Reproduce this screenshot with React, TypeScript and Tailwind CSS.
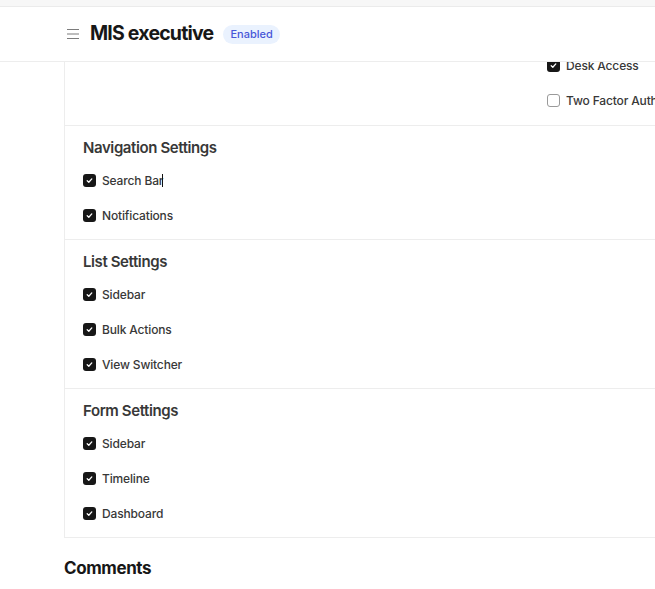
import React from "react";

function Check({ checked }: { checked: boolean }) {
  if (!checked) {
    return <span className="w-[13px] h-[13px] rounded-[3px] border border-[#9a9a9a] bg-white shrink-0" />;
  }
  return (
    <span className="w-[13px] h-[13px] rounded-[3px] bg-[#171717] shrink-0 flex items-center justify-center">
      <svg width="9" height="9" viewBox="0 0 9 9" fill="none">
        <path d="M2.2 4.7 L3.8 6.2 L6.8 2.9" stroke="white" strokeWidth="1.3" strokeLinecap="round" strokeLinejoin="round" />
      </svg>
    </span>
  );
}

function Row({ label, checked = true, caret = false }: { label: string; checked?: boolean; caret?: boolean }) {
  return (
    <div className="h-[35px] flex items-center gap-[6px]">
      <Check checked={checked} />
      <span className="text-[12px] font-medium tracking-[-0.15px] text-[#383838] leading-none whitespace-nowrap flex items-center">
        {label}
        {caret && <span className="inline-block w-px h-[13px] bg-[#111] ml-[-1px]" />}
      </span>
    </div>
  );
}

function Heading({ title }: { title: string }) {
  return <div className="h-[20px] flex items-center text-[15px] font-semibold tracking-[-0.4px] text-[#383838]">{title}</div>;
}

function Section({ title, children, last = false }: { title: string; children: React.ReactNode; last?: boolean }) {
  return (
    <div className={last ? "pt-[12px] pb-[6px] px-[18px]" : "pt-[12px] pb-[6px] px-[18px] border-b border-[#ededed]"}>
      <Heading title={title} />
      <div className="mt-[5px]">{children}</div>
    </div>
  );
}

export default function App() {
  return (
    <div className="w-[655px] h-[589px] overflow-hidden bg-white flex flex-col" style={{ fontFamily: "Inter, 'Noto Sans', sans-serif" }}>
      <div className="h-[7px] shrink-0 bg-[#f7f7f7] border-b border-[#ebebeb]" />
      <div className="h-[55px] shrink-0 border-b border-[#ededed] flex items-center pl-[66px] bg-white">
        <svg width="14" height="14" viewBox="0 0 14 14" className="mr-[10px]">
          <path d="M1 2.5 H13 M1 7 H13 M1 11.5 H13" stroke="#7c7c7c" strokeWidth="1.2" />
        </svg>
        <span className="text-[19.5px] font-bold text-[#171717] tracking-[-0.8px]">MIS executive</span>
        <span className="ml-[10px] h-[19px] px-[7px] rounded-[10px] bg-[#eaf2fe] text-[#4857d8] text-[11px] font-medium flex items-center">Enabled</span>
      </div>
      <div className="flex-1 overflow-hidden">
        <div className="-mt-[14px] w-[1000px] pl-[64px]">
          <div className="border-l border-b border-[#ededed]">
            <div className="pb-[7px] px-[18px] border-b border-[#ededed] grid grid-cols-[464px_1fr]">
              <div />
              <div>
                <Row label="Desk Access" />
                <Row label="Two Factor Authentication" checked={false} />
              </div>
            </div>
            <Section title="Navigation Settings">
              <Row label="Search Bar" caret />
              <Row label="Notifications" />
            </Section>
            <Section title="List Settings">
              <Row label="Sidebar" />
              <Row label="Bulk Actions" />
              <Row label="View Switcher" />
            </Section>
            <Section title="Form Settings" last>
              <Row label="Sidebar" />
              <Row label="Timeline" />
              <Row label="Dashboard" />
            </Section>
          </div>
          <div className="mt-[18px] text-[17px] font-bold tracking-[-0.4px] text-[#171717]">Comments</div>
        </div>
      </div>
    </div>
  );
}
